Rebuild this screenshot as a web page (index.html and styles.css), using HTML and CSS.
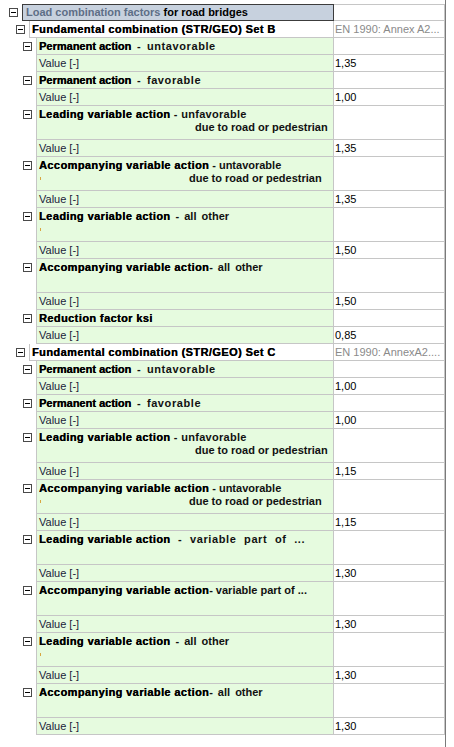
FILE: index.html
```html
<!DOCTYPE html>
<html>
<head>
<meta charset="utf-8">
<link rel="stylesheet" href="styles.css">
</head>
<body>
<div class="page">
  <div class="grid">
    <div class="row head">
      <div class="ind i0"><span class="tog"></span></div>
      <div class="name"><span class="hd">Load combination factors</span> for road bridges</div>
      <div class="val"></div>
    </div>

    <div class="row lv1">
      <div class="ind i1"><span class="tog"></span></div>
      <div class="name"><span class="w">Fundamental combination (STR/GEO) Set B</span></div>
      <div class="val ref">EN 1990: Annex A2...</div>
    </div>
    <div class="row lv2">
      <div class="ind i2"><span class="tog"></span></div>
      <div class="name"><span class="p">Permanent action</span><span class="s pw"> - untavorable</span></div>
      <div class="val"></div>
    </div>
    <div class="row lv2">
      <div class="ind i2"></div>
      <div class="name vn">Value [-]</div>
      <div class="val">1,35</div>
    </div>
    <div class="row lv2">
      <div class="ind i2"><span class="tog"></span></div>
      <div class="name"><span class="p">Permanent action</span><span class="s pw"> - favorable</span></div>
      <div class="val"></div>
    </div>
    <div class="row lv2">
      <div class="ind i2"></div>
      <div class="name vn">Value [-]</div>
      <div class="val">1,00</div>
    </div>
    <div class="row lv2 tall">
      <div class="ind i2"><span class="tog"></span></div>
      <div class="name"><div class="t1"><span class="w">Leading variable action</span><span class="s lw"> - unfavorable</span></div><div class="t2"><span class="s ind-a">due to road or pedestrian</span></div></div>
      <div class="val"></div>
    </div>
    <div class="row lv2">
      <div class="ind i2"></div>
      <div class="name vn">Value [-]</div>
      <div class="val">1,35</div>
    </div>
    <div class="row lv2 tall">
      <div class="ind i2"><span class="tog"></span></div>
      <div class="name"><div class="t1"><span class="w">Accompanying variable action</span><span class="s"> - untavorable</span></div><div class="t2"><span class="tick"></span><span class="s ind-b">due to road or pedestrian</span></div></div>
      <div class="val"></div>
    </div>
    <div class="row lv2">
      <div class="ind i2"></div>
      <div class="name vn">Value [-]</div>
      <div class="val">1,35</div>
    </div>
    <div class="row lv2 tall">
      <div class="ind i2"><span class="tog"></span></div>
      <div class="name"><div class="t1"><span class="w">Leading variable action</span><span class="s ws"> - all other</span></div><div class="t2"><span class="tick"></span></div></div>
      <div class="val"></div>
    </div>
    <div class="row lv2">
      <div class="ind i2"></div>
      <div class="name vn">Value [-]</div>
      <div class="val">1,50</div>
    </div>
    <div class="row lv2 tall">
      <div class="ind i2"><span class="tog"></span></div>
      <div class="name"><div class="t1"><span class="w">Accompanying variable action</span><span class="s ws">- all other</span></div><div class="t2"></div></div>
      <div class="val"></div>
    </div>
    <div class="row lv2">
      <div class="ind i2"></div>
      <div class="name vn">Value [-]</div>
      <div class="val">1,50</div>
    </div>
    <div class="row lv2">
      <div class="ind i2"><span class="tog"></span></div>
      <div class="name"><span class="w">Reduction factor ksi</span></div>
      <div class="val"></div>
    </div>
    <div class="row lv2">
      <div class="ind i2"></div>
      <div class="name vn">Value [-]</div>
      <div class="val">0,85</div>
    </div>

    <div class="row lv1">
      <div class="ind i1"><span class="tog"></span></div>
      <div class="name"><span class="w">Fundamental combination (STR/GEO) Set C</span></div>
      <div class="val ref">EN 1990: AnnexA2....</div>
    </div>
    <div class="row lv2">
      <div class="ind i2"><span class="tog"></span></div>
      <div class="name"><span class="p">Permanent action</span><span class="s pw"> - untavorable</span></div>
      <div class="val"></div>
    </div>
    <div class="row lv2">
      <div class="ind i2"></div>
      <div class="name vn">Value [-]</div>
      <div class="val">1,00</div>
    </div>
    <div class="row lv2">
      <div class="ind i2"><span class="tog"></span></div>
      <div class="name"><span class="p">Permanent action</span><span class="s pw"> - favorable</span></div>
      <div class="val"></div>
    </div>
    <div class="row lv2">
      <div class="ind i2"></div>
      <div class="name vn">Value [-]</div>
      <div class="val">1,00</div>
    </div>
    <div class="row lv2 tall">
      <div class="ind i2"><span class="tog"></span></div>
      <div class="name"><div class="t1"><span class="w">Leading variable action</span><span class="s lw"> - unfavorable</span></div><div class="t2"><span class="s ind-a">due to road or pedestrian</span></div></div>
      <div class="val"></div>
    </div>
    <div class="row lv2">
      <div class="ind i2"></div>
      <div class="name vn">Value [-]</div>
      <div class="val">1,15</div>
    </div>
    <div class="row lv2 tall">
      <div class="ind i2"><span class="tog"></span></div>
      <div class="name"><div class="t1"><span class="w">Accompanying variable action</span><span class="s"> - untavorable</span></div><div class="t2"><span class="tick"></span><span class="s ind-b">due to road or pedestrian</span></div></div>
      <div class="val"></div>
    </div>
    <div class="row lv2">
      <div class="ind i2"></div>
      <div class="name vn">Value [-]</div>
      <div class="val">1,15</div>
    </div>
    <div class="row lv2 tall">
      <div class="ind i2"><span class="tog"></span></div>
      <div class="name"><div class="t1"><span class="w">Leading variable action</span><span class="s vp"> - variable part of ...</span></div><div class="t2"></div></div>
      <div class="val"></div>
    </div>
    <div class="row lv2">
      <div class="ind i2"></div>
      <div class="name vn">Value [-]</div>
      <div class="val">1,30</div>
    </div>
    <div class="row lv2 tall">
      <div class="ind i2"><span class="tog"></span></div>
      <div class="name"><div class="t1"><span class="w">Accompanying variable action</span><span class="s">- variable part of ...</span></div><div class="t2"></div></div>
      <div class="val"></div>
    </div>
    <div class="row lv2">
      <div class="ind i2"></div>
      <div class="name vn">Value [-]</div>
      <div class="val">1,30</div>
    </div>
    <div class="row lv2 tall">
      <div class="ind i2"><span class="tog"></span></div>
      <div class="name"><div class="t1"><span class="w">Leading variable action</span><span class="s ws"> - all other</span></div><div class="t2"><span class="tick"></span></div></div>
      <div class="val"></div>
    </div>
    <div class="row lv2">
      <div class="ind i2"></div>
      <div class="name vn">Value [-]</div>
      <div class="val">1,30</div>
    </div>
    <div class="row lv2 tall">
      <div class="ind i2"><span class="tog"></span></div>
      <div class="name"><div class="t1"><span class="w">Accompanying variable action</span><span class="s ws">- all other</span></div><div class="t2"></div></div>
      <div class="val"></div>
    </div>
    <div class="row lv2">
      <div class="ind i2"></div>
      <div class="name vn">Value [-]</div>
      <div class="val">1,30</div>
    </div>
  </div>
  <div class="vline"></div>
</div>
</body>
</html>
```

FILE: styles.css
```css
html, body {
  margin: 0;
  padding: 0;
  background: #ffffff;
}

body {
  font-family: "Liberation Sans", Arial, sans-serif;
  font-size: 11px;
  color: #000;
}

.page {
  display: flex;
  height: 747px;
}

.grid {
  width: 445px;
  padding-top: 4px;
  display: flex;
  flex-direction: column;
}

.vline {
  width: 1px;
  background: #7a7a7a;
}

.row {
  display: flex;
  height: 17px;
  flex: none;
}

.row.tall {
  height: 34px;
}

.ind {
  flex: none;
  display: flex;
  align-items: flex-start;
  box-sizing: border-box;
  padding-top: 4px;
}

.i0 { width: 22px; padding-left: 9px; }
.i1 { width: 29px; padding-left: 16px; }
.i2 { width: 36px; padding-left: 23px; }

.tog {
  width: 9px;
  height: 9px;
  box-sizing: border-box;
  border: 1px solid #4a4a4a;
  background: #fff;
  display: flex;
  align-items: center;
  justify-content: center;
}

.tog::after {
  content: "";
  width: 5px;
  height: 1px;
  background: #000;
}

.name {
  flex: 1;
  min-width: 0;
  box-sizing: border-box;
  border-left: 1px solid #c6c6c6;
  border-bottom: 1px solid #c6c6c6;
  padding-left: 2px;
  line-height: 16px;
  white-space: pre;
  overflow: hidden;
}

.val {
  flex: none;
  width: 112px;
  box-sizing: border-box;
  border-left: 1px solid #c6c6c6;
  border-bottom: 1px solid #c6c6c6;
  border-right: 1px solid #c6c6c6;
  background: #fff;
  padding-left: 1px;
  line-height: 16px;
  white-space: pre;
  overflow: hidden;
}

.head .name {
  border: 1px solid #3c3c3c;
  background: #c7d1de;
  padding-left: 3px;
  line-height: 15px;
  font-weight: 700;
}

.head .val {
  width: 111px;
  border-left: none;
  border-top: 1px solid #c6c6c6;
}

.hd {
  color: #5e6e86;
}

.lv1 .name {
  background: #fff;
}

.lv2 .name {
  background: #e6fbdf;
}

.ref {
  color: #8a8a8a;
}

.w {
  font-weight: 700;
  letter-spacing: 0.4px;
  text-shadow: 0.25px 0 0 #000;
}

.p {
  font-weight: 700;
  text-shadow: 0.25px 0 0 #000;
}

.s {
  font-weight: 700;
  color: #111;
}

.pw {
  letter-spacing: 0.6px;
  word-spacing: 2px;
}

.lw {
  letter-spacing: 0.3px;
}

.ws {
  word-spacing: 2px;
}

.vp {
  word-spacing: 4px;
  letter-spacing: 0.6px;
}

.vn {
  color: #1b1b3a;
}

.t1 {
  height: 14px;
  overflow: hidden;
  line-height: 16px;
}

.t2 {
  line-height: 15px;
  display: flex;
  align-items: center;
  height: 15px;
}

.tick {
  width: 1px;
  height: 3px;
  background: #d8a640;
  margin-left: 1px;
}

.ind-a {
  padding-left: 156px;
}

.ind-b {
  padding-left: 148px;
}
```
